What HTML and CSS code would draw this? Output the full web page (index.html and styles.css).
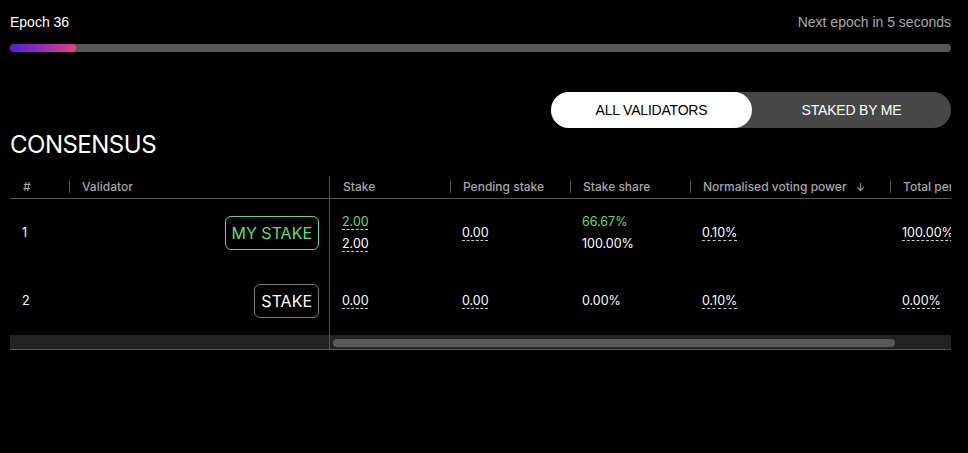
FILE: index.html
```html
<!DOCTYPE html>
<html lang="en">
<head>
<meta charset="utf-8">
<title>Consensus</title>
<link rel="stylesheet" href="styles.css">
</head>
<body>
<div class="page">
  <div class="epoch-row">
    <span class="epoch">Epoch 36</span>
    <span class="next">Next epoch in 5 seconds</span>
  </div>
  <div class="progress"><div class="progress-fill" style="width: 66px"></div></div>

  <div class="toggle-row">
    <div class="toggle">
      <button class="tg active">ALL VALIDATORS</button>
      <button class="tg">STAKED BY ME</button>
    </div>
  </div>

  <h1 class="title">CONSENSUS</h1>

  <div class="table">
    <div class="fixed">
      <div class="row head fixed-cols">
        <div class="th"><span class="hd first">#</span></div>
        <div class="th"><span class="hd">Validator</span></div>
      </div>
      <div class="row body fixed-cols">
        <div class="td">1</div>
        <div class="td right"><button class="btn my">MY STAKE</button></div>
      </div>
      <div class="row body fixed-cols">
        <div class="td">2</div>
        <div class="td right"><button class="btn">STAKE</button></div>
      </div>
      <div class="track"></div>
    </div>
    <div class="scroll">
      <div class="row head scroll-cols">
        <div class="th"><span class="hd first">Stake</span></div>
        <div class="th"><span class="hd">Pending stake</span></div>
        <div class="th"><span class="hd">Stake share</span></div>
        <div class="th"><span class="hd">Normalised voting power <span class="arrow">↓</span></span></div>
        <div class="th"><span class="hd">Total penalties</span></div>
      </div>
      <div class="row body scroll-cols">
        <div class="td stack"><span class="u green">2.00</span><span class="u">2.00</span></div>
        <div class="td"><span class="u">0.00</span></div>
        <div class="td stack"><span class="green">66.67%</span><span>100.00%</span></div>
        <div class="td"><span class="u">0.10%</span></div>
        <div class="td"><span class="u">100.00%</span></div>
      </div>
      <div class="row body scroll-cols">
        <div class="td"><span class="u">0.00</span></div>
        <div class="td"><span class="u">0.00</span></div>
        <div class="td"><span>0.00%</span></div>
        <div class="td"><span class="u">0.10%</span></div>
        <div class="td"><span class="u">0.00%</span></div>
      </div>
      <div class="track"><div class="thumb"></div></div>
    </div>
  </div>
</div>
</body>
</html>
```

FILE: styles.css
```css
* { box-sizing: border-box; }

html, body {
  margin: 0;
  background: #000;
  color: #fff;
}

.page {
  padding: 14px 17px 0 10px;
}

.epoch-row {
  display: flex;
  justify-content: space-between;
  font-family: "Liberation Sans", Arial, sans-serif;
  font-size: 14px;
  line-height: 16px;
}

.next { color: #aaa; }

.progress {
  margin-top: 14px;
  height: 8px;
  border-radius: 4px;
  background: #575757;
  overflow: hidden;
}

.progress-fill {
  height: 100%;
  border-radius: 4px;
  background: linear-gradient(90deg, #571fd0 0%, #9a2bb5 50%, #e6417c 100%);
}

.toggle-row {
  display: flex;
  justify-content: flex-end;
  margin-top: 40px;
}

.toggle {
  display: grid;
  grid-template-columns: 201px 199px;
  width: 400px;
  height: 36px;
  border-radius: 18px;
  background: #474747;
}

.tg {
  border: 0;
  margin: 0;
  padding: 0;
  background: transparent;
  color: #fff;
  font-family: "Liberation Sans", Arial, sans-serif;
  font-size: 14px;
  letter-spacing: -0.2px;
  border-radius: 18px;
  cursor: pointer;
}

.tg.active {
  background: #fff;
  color: #000;
}

.title {
  margin: 2px 0 0 0;
  font-family: Inter, "Liberation Sans", sans-serif;
  font-weight: 400;
  font-size: 24px;
  line-height: 29px;
  letter-spacing: -0.5px;
}

.table {
  margin-top: 17px;
  display: flex;
  font-family: Inter, "Liberation Sans", sans-serif;
}

.fixed {
  width: 320px;
  flex: none;
  border-right: 1px solid #555;
}

.scroll {
  flex: 1;
  overflow: hidden;
}

.row { display: grid; }

.fixed-cols { grid-template-columns: 59px 260px; }
.scroll-cols { grid-template-columns: 120px 120px 120px 200px 160px; }

.head {
  height: 23px;
  border-bottom: 1px solid #555;
  align-items: center;
}

.th {
  font-size: 12px;
  font-weight: 500;
  color: #a6a6a6;
  white-space: nowrap;
}

.hd {
  display: block;
  border-left: 1px solid #5a5a5a;
  padding-left: 12px;
  line-height: 12px;
}

.hd.first {
  border-left-color: transparent;
}

.arrow {
  margin-left: 6px;
  font-size: 11px;
}

.body {
  height: 68px;
  align-items: center;
}

.td {
  padding-left: 12px;
  font-size: 12.5px;
  font-weight: 400;
  line-height: 16px;
  white-space: nowrap;
}

.td.right {
  display: flex;
  justify-content: flex-end;
  padding-right: 10px;
}

.stack {
  display: flex;
  flex-direction: column;
  align-items: flex-start;
  gap: 6px;
}

.u {
  text-decoration: underline dashed #c8c8c8;
  text-decoration-thickness: 1px;
  text-underline-offset: 3px;
}

.green { color: #5ade7b; }

.btn {
  font-family: Inter, "Liberation Sans", sans-serif;
  font-size: 16px;
  font-weight: 400;
  line-height: 20px;
  padding: 6px 6px;
  border-radius: 6px;
  border: 1px solid #7a7a7a;
  background: transparent;
  color: #fff;
  cursor: pointer;
}

.btn.my {
  border-color: #5ade7b;
  color: #5ade7b;
}

.track {
  height: 15px;
  background: #232323;
  border-bottom: 1px solid #555;
  padding: 4px 0 0 3px;
}

.thumb {
  width: 562px;
  height: 8px;
  border-radius: 4px;
  background: #5a5a5a;
}
```
